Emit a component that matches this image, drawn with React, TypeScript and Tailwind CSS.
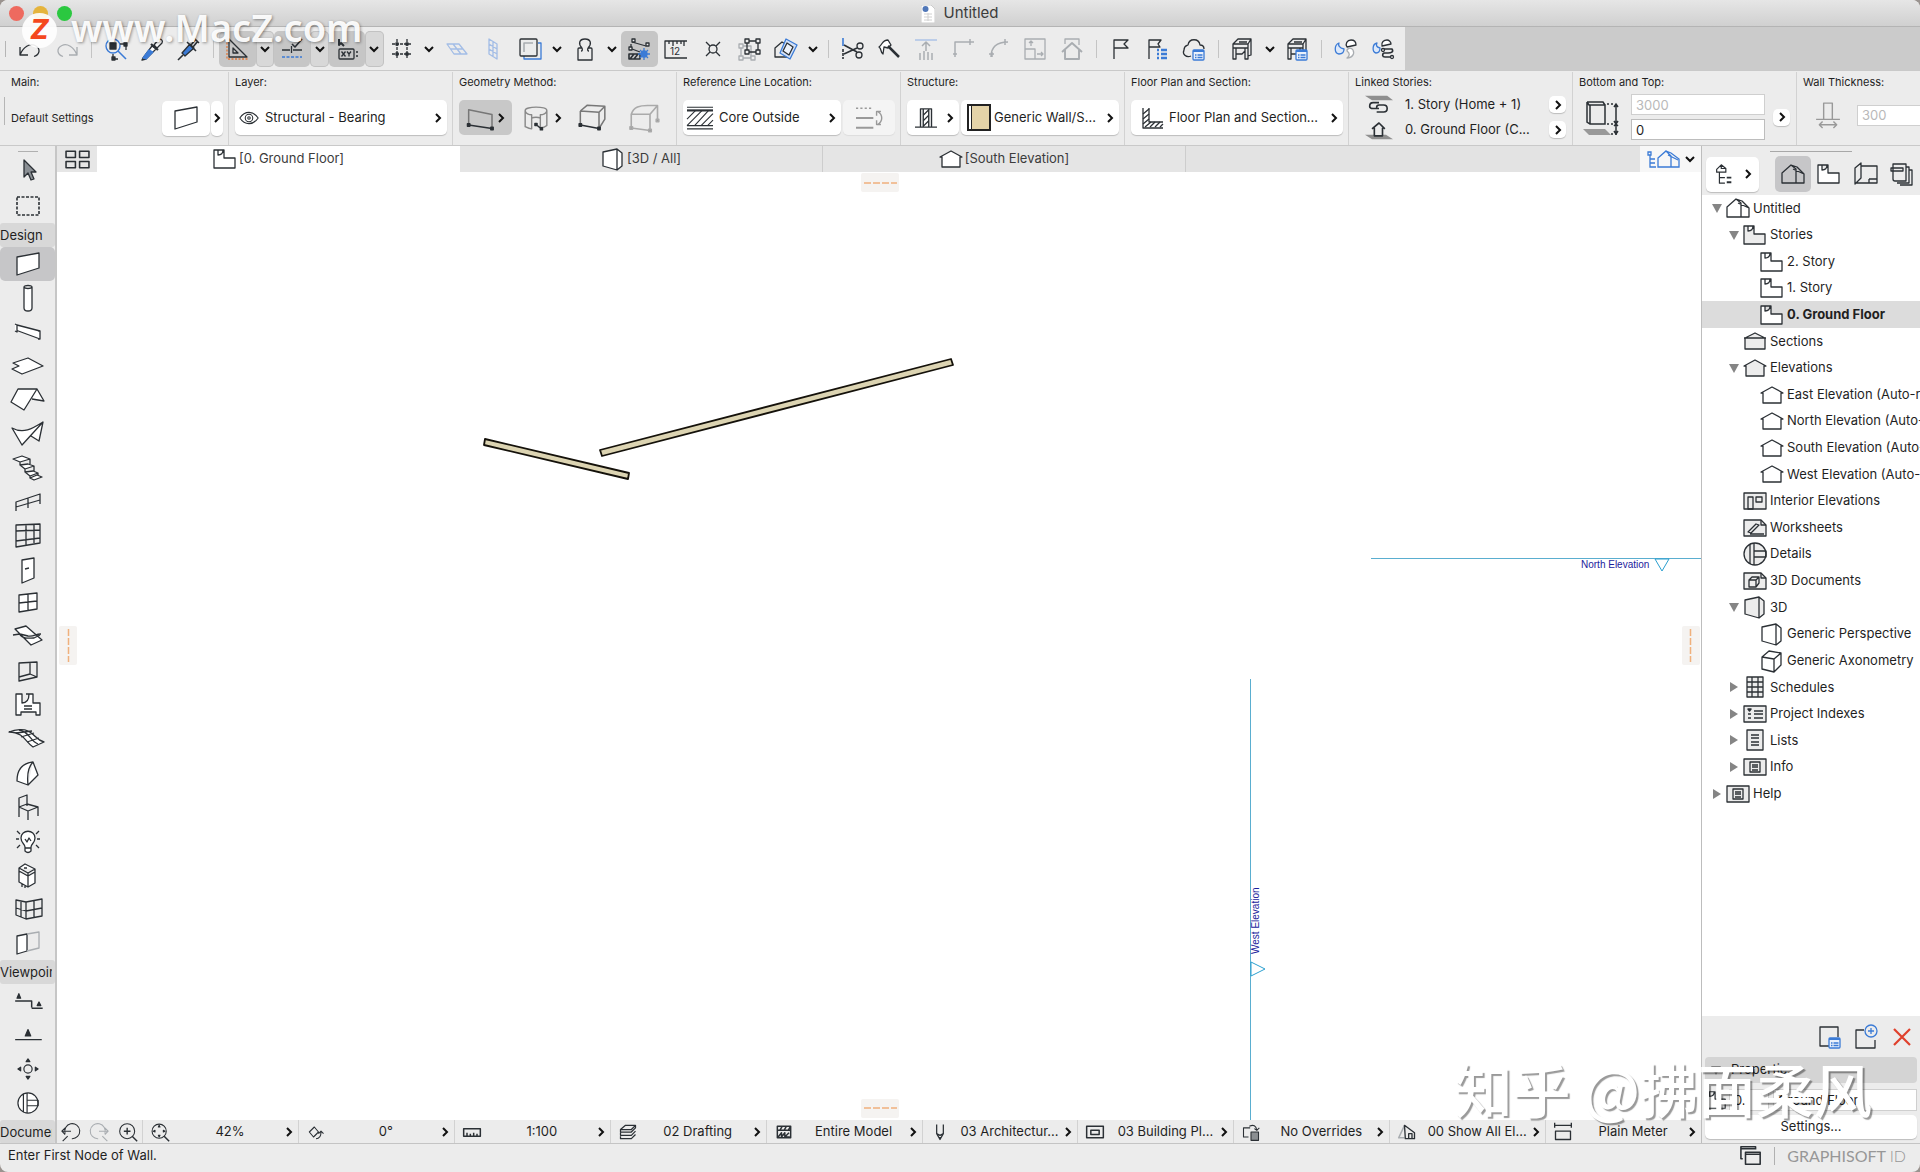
import React, { useState } from 'react';
import { clsx } from 'clsx';

interface GlyphProps {
  size?: number;
  color?: string;
  fill?: string;
  strokeWidth?: number;
  children: React.ReactNode;
}

const INK = '#2b3035';
const BLUE = '#3b7bd6';
const PALE = '#a9adb1';

// All glyphs share a 24 unit box
function Glyph({ size = 24, color = INK, fill = 'none', strokeWidth = 1.3, children }: GlyphProps) {
  return (
    <svg
      width={size}
      height={size}
      viewBox="0 0 24 24"
      fill={fill}
      stroke={color}
      strokeWidth={strokeWidth}
      strokeLinejoin="round"
      className="shrink-0 overflow-visible"
      aria-hidden="true"
    >
      {children}
    </svg>
  );
}

function Chevron({ down = false }: { down?: boolean }) {
  return (
    <svg width="10" height="10" viewBox="0 0 10 10" fill="none" stroke="#111" strokeWidth="2" className="shrink-0" aria-hidden="true">
      <path d={down ? 'M1 3l4 4 4-4' : 'M3 1l4 4-4 4'} />
    </svg>
  );
}

const listBadge = (x: number, y: number) => (
  <g stroke={BLUE}>
    <rect x={x} y={y} width="11" height="10" rx="1" fill="#eaf1fb" />
    <path d={`M${x} ${y + 1}h11`} strokeWidth="2" />
    <path d={`M${x + 2} ${y + 5}h1.5m1 0h5M${x + 2} ${y + 7.5}h1.5m1 0h5`} />
  </g>
);

const tableShape = (
  <path d="M3 7l5-5h13l-3 5zM3 7v15h3V11h9v11h3V7M21 2v16l-3 1M3 11h15M9 5h8M6 17h6l3-3" />
);

const icons = {
  undo: <Glyph><path d="M2 10v8h8M2 18C5 10 12 6 17 8.500c6 3 5 9-1 11" /></Glyph>,
  redo: <Glyph color={PALE}><path d="M22 10v8h-8M22 18C19 10 12 6 7 8.500c-6 3-5 9 1 11" /></Glyph>,
  find: (
    <Glyph>
      <circle cx="9" cy="9" r="7" stroke={BLUE} strokeWidth="1.400" />
      <rect x="6" y="6" width="6" height="6" fill={INK} />
      <path d="M14 14l8 8" stroke={BLUE} strokeWidth="1.600" />
      <path d="M16 7h6v6M9 17v5h5" />
      <path d="M20 6h3v3h-3zM8 20h3v3H8z" fill={INK} />
    </Glyph>
  ),
  dropper: (
    <Glyph>
      <path d="M3 21l9-12 4 3L6 22l-4 1z" fill="#fff" />
      <path d="M3 21l6-8 4 2-7 7z" fill={BLUE} stroke={BLUE} />
      <path d="M11 7l7 6" strokeWidth="2.200" />
      <path d="M14 8l5-6c3 0 4 2 3 4l-5 5z" fill="#fff" />
    </Glyph>
  ),
  syringe: (
    <Glyph>
      <path d="M1 23l5-5" strokeWidth="1.600" />
      <path d="M5 16l8-9 4 4-9 8z" fill={BLUE} />
      <path d="M10 5l9 9M14 8l5-6M16 10l5-6M17 1l5 5" strokeWidth="1.600" />
    </Glyph>
  ),
  setSquare: (
    <Glyph>
      <path d="M4 2v18h18zM8 11v5h5z" />
      <path d="M2 2v20h21" stroke="#e07a3d" strokeDasharray="2 1.500" />
    </Glyph>
  ),
  guides: (
    <Glyph>
      <path d="M2 13h8m3 0h9M11.500 9v7" />
      <path d="M12 7l3 3 7-8" strokeWidth="1.600" />
      <path d="M2 20h20" stroke={BLUE} strokeWidth="1.600" strokeDasharray="3 1.500" />
    </Glyph>
  ),
  coords: (
    <Glyph>
      <path d="M4 2v6l2-2 3 3" strokeWidth="2" />
      <rect x="4" y="12" width="15" height="10" rx="1" />
      <path d="M6.500 14.500l4 5m0-5l-4 5M12 14.500l2 2.500 2-2.500M14 17v2.500M21 15h2M21 19h2" />
    </Glyph>
  ),
  grid: (
    <Glyph>
      <path d="M7 2v20M17 2v20M2 7h20M2 17h20" strokeDasharray="3 1" />
      <path d="M6 6h2v2H6zM16 6h2v2h-2zM6 16h2v2H6zM16 16h2v2h-2z" fill={INK} />
    </Glyph>
  ),
  plane: <Glyph color="#a3bde6"><path d="M2 7h12l8 10H9zM5 12h13M8 7l8 10" /></Glyph>,
  gridPlane: <Glyph color="#a3bde6"><path d="M8 2l8 5v15l-8-5zM12 4.500v15M8 7l8 5M8 12l8 5" /></Glyph>,
  layers: (
    <Glyph>
      <path d="M20 6h3v16H6v-3" stroke={BLUE} strokeWidth="1.300" />
      <rect x="2" y="2" width="17" height="17" rx="1" />
      <path d="M6 15V6h9" stroke={PALE} strokeWidth="1.600" />
    </Glyph>
  ),
  weight: <Glyph><path d="M9 11C5 7 6 2 12 2s7 5 3 9M9 11H6q-1 0-1 1v11h14V12q0-1-1-1h-3M9 11q1 3-1 3M15 11q-1 3 1 3" /></Glyph>,
  snap: (
    <Glyph>
      <path d="M5 5l14 4M4 7v6M5 12l8 3" />
      <path d="M5 2h3v3H5zM19 6h3v3h-3zM2 10h3v3H2z" fill="#eee" />
      <path d="M2 17h11v5H2zM3 22l4-5M7 22l4-5" strokeWidth="1.600" />
      <path d="M17 11v12M11 17h12M13 13l8 8M21 13l-8 8" stroke={BLUE} />
      <circle cx="17" cy="17" r="3" fill={BLUE} stroke={BLUE} />
    </Glyph>
  ),
  ruler: (
    <Glyph>
      <path d="M23 21H1V4h22M5 4v3M9 4v5M13 4v3M17 4v3M20 4v5" />
      <text x="6" y="18" fontSize="10" stroke="none" fill={INK}>12</text>
    </Glyph>
  ),
  node: <Glyph><circle cx="12" cy="12" r="4" /><path d="M5 5l4 4M19 5l-4 4M5 19l4-4M19 19l-4-4" /></Glyph>,
  group: (
    <Glyph>
      <path d="M4 9h10v12H4z" stroke={PALE} />
      <path d="M2 7h4v4H2zM2 19h4v4H2zM14 19h4v4h-4z" fill="#eee" stroke={PALE} />
      <path d="M10 4h11v11H10z" />
      <path d="M8 2h4v4H8zM19 2h4v4h-4zM8 13h4v4H8zM19 13h4v4h-4z" fill="#eee" />
    </Glyph>
  ),
  houseFrame: (
    <Glyph>
      <path d="M1 11l7-6 5 3v12H1z" />
      <path d="M12 2l11 6-7 14-10-6z" stroke={BLUE} fill="#d3e1f7" />
      <path d="M13 6l6 4-4 8-6-4z" stroke={INK} fill="#eef3fb" />
    </Glyph>
  ),
  scissors: (
    <Glyph>
      <path d="M2 1v8" stroke={BLUE} strokeWidth="1.600" />
      <path d="M2 12v10" strokeWidth="1.600" strokeDasharray="3 1" />
      <path d="M3 8l13 7M3 17l13-6" strokeWidth="1.600" />
      <circle cx="19" cy="9" r="3" /><circle cx="18" cy="18" r="3" />
    </Glyph>
  ),
  axe: <Glyph><path d="M2 10c4-3 3-7 9-7l3 5-3 3-4-1-1 7c-3-2-1-5-4-7z" fill="#fff" /><path d="M11 9l11 11" strokeWidth="2.500" /></Glyph>,
  adjust: <Glyph color={PALE}><path d="M1 3h22" stroke="#a3bde6" /><path d="M12 14V5M8 9l4-4 4 4M6 16v7M10 14v9M14 15v8M18 16v7" strokeWidth="1.500" /></Glyph>,
  corner: <Glyph color={PALE}><path d="M5 20V5h11M3 17h4M20 2v6M16 5h8" strokeWidth="1.500" /></Glyph>,
  curve: <Glyph color={PALE}><path d="M4 20C4 11 9 5 21 5M2 17h5M18 2v6M5 20v-5" strokeWidth="1.500" /></Glyph>,
  resize: <Glyph color={PALE}><path d="M2 2h20v20H2zM2 12h10v10M8 9V4M6 6l2-2 2 2M14 17h6M18 15l2 2-2 2" /></Glyph>,
  roofGrey: <Glyph color={PALE}><path d="M5 7V2h14v6" /><path d="M2 15L12 6l10 9M5 13v9h14v-9" strokeWidth="1.900" /></Glyph>,
  flag: <Glyph><path d="M5 22V3h14l-4 4 4 4H5" /></Glyph>,
  flagList: (
    <Glyph>
      <path d="M4 22V3h12l-3 4 2 3H4" />
      <path d="M12 13h2m2 0h6M12 17h2m2 0h6M12 21h2m2 0h6" stroke={BLUE} strokeWidth="2.400" />
    </Glyph>
  ),
  cloudList: (
    <Glyph>
      <path d="M9 19c-5 2-9-2-7-6 0-4 2-4 4-5 1-7 11-7 12 0 3 0 4 2 4 4" />
      {listBadge(11, 13)}
    </Glyph>
  ),
  table: <Glyph>{tableShape}</Glyph>,
  tableList: <Glyph>{tableShape}{listBadge(11, 13)}</Glyph>,
  fans: (
    <Glyph>
      <path d="M13 10c-2-3 0-7 4-7 3 0 5 2 5 5z" fill="#fff" />
      <path d="M10 12c-5-1-6-4-5-6-5 2-5 10 0 11 3 0 5-2 5-5z" stroke={BLUE} fill="#dde9fa" />
      <path d="M13 14c0-3 4-4 6-1 2 4-1 8-6 8 3-2 3-5 0-7z" stroke={PALE} fill="#fff" />
    </Glyph>
  ),
  fansLink: (
    <Glyph>
      <path d="M11 9c-1-4 2-6 5-6 2 0 4 2 4 4z" fill="#fff" />
      <path d="M9 11c-4-1-4-3-3-5-5 1-5 9-1 10 3 0 4-2 4-5z" stroke={BLUE} fill="#dde9fa" />
      <path d="M12 12h9c2 3-1 4-4 4h-4c-2 1-2 4 1 4h7" strokeWidth="1.600" />
      <circle cx="12" cy="13" r="1.500" fill="#fff" /><circle cx="21" cy="20" r="1.500" fill="#fff" />
    </Glyph>
  ),
};

type IconName = keyof typeof icons;
type ToolItem = { kind: 'icon'; name: IconName; label: string; on?: boolean } | { kind: 'more'; on?: boolean } | { kind: 'sep' };

const icon = (name: IconName, label: string, on = false): ToolItem => ({ kind: 'icon', name, label, on });
const more = (on = false): ToolItem => ({ kind: 'more', on });
const sep: ToolItem = { kind: 'sep' };

const toolbar: ToolItem[] = [
  icon('undo', 'Undo'), icon('redo', 'Redo'), sep,
  icon('find', 'Find & Select'), icon('dropper', 'Pick Up Parameters'), icon('syringe', 'Inject Parameters'), sep,
  icon('setSquare', 'Guide Lines', true), more(true),
  icon('guides', 'Snap Guides', true), more(true),
  icon('coords', 'Tracker', true), more(true),
  icon('grid', 'Grid Snap'), more(),
  icon('plane', 'Editing Plane'), icon('gridPlane', 'Grid Plane'),
  icon('layers', 'Trace Reference'), more(),
  icon('weight', 'Gravity'), more(),
  icon('snap', 'Element Snap', true), icon('ruler', 'Measure'), icon('node', 'Suspend Groups'), icon('group', 'Group'),
  icon('houseFrame', 'Marquee View'), more(), sep,
  icon('scissors', 'Split'), icon('axe', 'Trim'), icon('adjust', 'Adjust'), icon('corner', 'Intersect'),
  icon('curve', 'Fillet'), icon('resize', 'Resize'), icon('roofGrey', 'Trim to Roof'), sep,
  icon('flag', 'Markup'), icon('flagList', 'Markup List'), icon('cloudList', 'Cloud'), sep,
  icon('table', 'Favorites'), more(), icon('tableList', 'Library'), sep,
  icon('fans', 'Rotate Views'), icon('fansLink', 'Link Views'),
];

const tools: { label: string; art: React.ReactNode }[] = [
  { label: 'Wall', art: <path d="M1 5l22-4v15L1 23z" fill="#fff" /> },
  { label: 'Column', art: <path d="M8 1v21c0 4 8 4 8 0V1c0-2-8-2-8 0 1 2 7 2 8 0" fill="#fff" /> },
  { label: 'Beam', art: <path d="M-1 4l2 1v7l-2-1M1 5l23 6v8L1 10.500M22 11h2M22 19h2" fill="#fff" /> },
  { label: 'Slab', art: <path d="M1 9l15-5 15 8-21 8-10-5 7-3z" fill="#fff" transform="translate(-4 0)" /> },
  { label: 'Roof', art: <path d="M2 1h19L8 22-5 14zM21 1l7 12-12-2" fill="#fff" /> },
  { label: 'Shell', art: <path d="M-4 6c11 6 20 1 31-6L6 23zM27 0l-4 19-8-5" fill="#fff" /> },
  { label: 'Stair', art: <path d="M-3 3l9-3 8 3-10 3zM4 6v3l8-1 6 2-9 3-5-4M14 3v5M9 13v3l8-1 5 2-8 3-5-4M18 10v5M14 20v2l7-3 5 2-8 3-4-2M22 17v2" fill="#fff" /> },
  { label: 'Railing', art: <path d="M0 21V12l24-8v10M0 17l24-7M12 8v10" /> },
  { label: 'Curtain Wall', art: <path d="M0 1l24-1v19L0 23zM10 1v20M18 0v19M0 7l24-1M0 17l24-3" /> },
  { label: 'Door', art: <path d="M6 2l12-2v20L6 25zM9 11l4-1" fill="#fff" /> },
  { label: 'Window', art: <path d="M3 4l18-2v16L3 21zM12 3v17M3 12l18-2" fill="#fff" /> },
  { label: 'Skylight', art: <path d="M-1 4l11-3 16 14-11 5zM-3 10l7-1 8 2c6 1 7-2 13-2M4 10c4 4 8 3 14 3l6-3" fill="#fff" /> },
  { label: 'Opening', art: <path d="M3 4l18-1v15L3 22zM14 3v12L3 18M14 15l7 3" /> },
  { label: 'Zone', art: <path d="M0 1h6v9c5 0 7-3 7-9h4v9h7v12h-4v-3H5v3H0zM8 13h8M8 16h8M10 1h6" fill="#fff" /> },
  { label: 'Mesh', art: <><path d="M-7 5c7-3 15-3 19-1 7 3 8 9 16 11l-11 5C10 16 8 5-7 5z" fill="#fff" /><path d="M3 3c10 1 11 11 19 14M0 6l16-2M5 10l13-4M11 15l12-4" /></> },
  { label: 'Morph', art: <path d="M1 20C1 8 7 2 17 1l5 13-10 10zM17 1c-5 5-6 14-5 23" fill="#fff" /> },
  { label: 'Object', art: <><path d="M3 22V3l8-3v11M3 12l8-3 11 3-10 4zM12 16v9M22 12v9" /></> },
  { label: 'Lamp', art: <path d="M9 18c0-3-4-4-4-9 0-9 14-9 14 0 0 5-4 6-4 9v4q-3 3-6 0zM9 19h6M9 10l2 3 2-4 2 3M1 2l3 3M23 2l-3 3M0 10h3M21 10h3M1 19l3-3M23 19l-3-3" fill="#fff" /> },
  { label: 'Equipment', art: <path d="M3 5l6-4 10 5v14l-7 4-9-5zM3 5l9 5 7-4M3 8l9 5 7-4M12 10v14M6 21v3M9 23v2M8 5h3" fill="#fff" /> },
  { label: 'Curtain Panel', art: <path d="M0 3l10 2 16-3v17l-16 3-10-4zM10 5v17M5 4v16M0 11l10 3 16-3M18 3v17" /> },
  { label: 'Corner Window', art: <><path d="M1 5l10-2v17l-10 3z" fill="#fff" /><path d="M11 3l12-2v16l-12 3" stroke={PALE} /></> },
];

const viewTools: { label: string; art: React.ReactNode }[] = [
  { label: 'Section', art: <><path d="M-2 12h18v7M16 20h12" strokeWidth="1.600" /><path d="M0 9l2-5 2 5zM22 17l2-4 2 4z" fill={INK} /></> },
  { label: 'Elevation', art: <path d="M-2 17h29M9 13l3-7 3 7z" fill={INK} /> },
  { label: 'Interior Elevation', art: <><circle cx="12" cy="12" r="4.500" /><path d="M10 4l2-3 2 3zM10 20l2 3 2-3zM4 10l-3 2 3 2zM20 10l3 2-3 2z" fill={INK} /></> },
  { label: 'Detail', art: <><circle cx="12" cy="12" r="11" fill="#fff" /><path d="M7 2v20M11 1v22M11 9h12v6H11" /></> },
];

const treeArt = {
  project: <path d="M1 11l9-8 5 4v14H1zM10 3l6 2 7 7v9h-8M12 7l11 5" fill="#fff" />,
  storiesFolder: <path d="M1 3h10v8h11v10H1zM5 3v5c3 0 5-2 5-5" fill="#ececec" />,
  story: <path d="M1 3h10v8h11v10H1zM5 3v5c3 0 5-2 5-5" fill="#fff" />,
  section: <path d="M2 9l10-5 10 5v11H2zM1 9h22" fill="#ececec" />,
  elevationFolder: <path d="M1 10l11-6 11 6h-2v10H3V10z" fill="#ececec" />,
  elevation: <path d="M1 10l11-6 11 6h-2v10H3V10z" fill="#fff" />,
  interior: <><path d="M1 4h22v16H1z" fill="#ececec" /><path d="M5 8h5v12H5zM13 8h6v5h-6z" /></>,
  worksheet: <><path d="M1 4h17l5 5v11H1z" fill="#ececec" /><path d="M5 16l8-8 3 1-8 8zM7 18h14M18 4v5h5" /></>,
  detail: <><circle cx="12" cy="12" r="11" fill="#ececec" /><path d="M7 2v20M11 1v22M11 9h12v6H11" /></>,
  doc3d: <><path d="M1 4h17l5 5v11H1z" fill="#ececec" /><path d="M6 11l3-3h7l-3 3zM6 11h7v7H6zM16 8v6l-3 4M18 4v5h5" /></>,
  boxFolder: <path d="M2 5l14-3 5 4v13l-5 4-14-4zM16 2v21" fill="#ececec" />,
  box: <path d="M2 5l14-3 5 4v13l-5 4-14-4zM16 2v21" fill="#fff" />,
  cube: <path d="M2 8l7-6 12 2v12l-7 7-12-3zM2 8l12 2 7-6M14 10v13" fill="#fff" />,
  schedule: <><path d="M4 2h16v20H4z" fill="#ececec" /><path d="M4 7h16M4 12h16M4 17h16M9 2v20M15 2v20" /></>,
  index: <><path d="M1 4h22v16H1z" fill="#ececec" /><path d="M5 7h3l-1.500 2zM5 12h3M5 16h3M11 9h9M11 12h9M11 16h9" strokeWidth="1.500" /></>,
  list: <><path d="M4 2h16v20H4z" fill="#ececec" /><path d="M8 7h8M8 10h8M8 14h8M8 17h8" /></>,
  info: <><path d="M1 4h22v16H1z" fill="#ececec" /><path d="M7 7h10v10H7zM9 10h6M9 12h6M9 15h6" /></>,
};

interface TreeRow {
  label: string;
  level: 0 | 1 | 2;
  art: keyof typeof treeArt;
  state?: 'open' | 'closed';
}

const tree: TreeRow[] = [
  { label: 'Untitled', level: 0, art: 'project', state: 'open' },
  { label: 'Stories', level: 1, art: 'storiesFolder', state: 'open' },
  { label: '2. Story', level: 2, art: 'story' },
  { label: '1. Story', level: 2, art: 'story' },
  { label: '0. Ground Floor', level: 2, art: 'story' },
  { label: 'Sections', level: 1, art: 'section' },
  { label: 'Elevations', level: 1, art: 'elevationFolder', state: 'open' },
  { label: 'East Elevation (Auto-rebuild Model)', level: 2, art: 'elevation' },
  { label: 'North Elevation (Auto-rebuild Model)', level: 2, art: 'elevation' },
  { label: 'South Elevation (Auto-rebuild Model)', level: 2, art: 'elevation' },
  { label: 'West Elevation (Auto-rebuild Model)', level: 2, art: 'elevation' },
  { label: 'Interior Elevations', level: 1, art: 'interior' },
  { label: 'Worksheets', level: 1, art: 'worksheet' },
  { label: 'Details', level: 1, art: 'detail' },
  { label: '3D Documents', level: 1, art: 'doc3d' },
  { label: '3D', level: 1, art: 'boxFolder', state: 'open' },
  { label: 'Generic Perspective', level: 2, art: 'box' },
  { label: 'Generic Axonometry', level: 2, art: 'cube' },
  { label: 'Schedules', level: 1, art: 'schedule', state: 'closed' },
  { label: 'Project Indexes', level: 1, art: 'index', state: 'closed' },
  { label: 'Lists', level: 1, art: 'list', state: 'closed' },
  { label: 'Info', level: 1, art: 'info', state: 'closed' },
  { label: 'Help', level: 0, art: 'info', state: 'closed' },
];

const quickOptions: { label: string; art: React.ReactNode }[] = [
  { label: '42%', art: <><circle cx="11" cy="11" r="8.500" /><path d="M17 17l6 6" strokeWidth="1.800" /><path d="M10 6l1-2 1 2zM10 16l1 2 1-2zM6 10l-2 1 2 1zM16 10l2 1-2 1z" fill={INK} /></> },
  { label: '0°', art: <path d="M4 12l6-6 5 6-6 6zM12 20c5 0 6-3 6-8M15 14l3-3 3 3" /> },
  { label: '1:100', art: <path d="M2 8h20v9H2zM6 17v-4M10 17v-3M14 17v-4M18 17v-3" strokeWidth="1.800" /> },
  { label: '02 Drafting', art: <path d="M3 9l6-5h12l-5 5zM3 9v3h13l5-5V4M3 13v3h13l5-5M3 17v3h13l5-5" strokeWidth="1.500" /> },
  { label: 'Entire Model', art: <path d="M4 5h16v14H4zM4 10h16M7 10l3-5M12 10l3-5M17 10l3-5M5 18l4-5v5l4-5v5l5-5M13 18h6" strokeWidth="1.800" /> },
  { label: '03 Architectur...', art: <path d="M8 3v11l4 7 4-7V3M8 14l4 2 4-2M12 18v3" strokeWidth="1.500" /> },
  { label: '03 Building Pl...', art: <path d="M2 5h20v14H2zM7 10h10v5H7z" strokeWidth="1.800" /> },
  { label: 'No Overrides', art: <><path d="M11 7H3v11h6M10 5c5-2 8-1 9 5M16 8l3 2 3-3" /><path d="M12 12h9v10h-9z" fill="#8b8f92" /></> },
  { label: '00 Show All El...', art: <><path d="M9 4L2 19h7" stroke={PALE} strokeWidth="1.800" /><path d="M9 4l12 9v7H10zM14 20v-6h4v6" strokeWidth="1.600" /></> },
  { label: 'Plain Meter', art: <path d="M2 4h20M2 1v6M22 1v6M3 11h18v10H3z" strokeWidth="1.600" /> },
];

const tabs = [
  { label: '[0. Ground Floor]', art: treeArt.story },
  { label: '[3D / All]', art: treeArt.box },
  { label: '[South Elevation]', art: treeArt.elevation },
];

const cardButton = 'flex items-center rounded-[5px] bg-white shadow-[0_1px_1px_#0003]';

function InfoSection({ title, className, children }: { title: string; className?: string; children: React.ReactNode }) {
  return (
    <section className={clsx('flex shrink-0 flex-col border-r border-[#d2d2d2] pr-[5px] pl-[6px]', className ?? 'w-56')}>
      <h2 className="pt-0.5 text-[11px] leading-4">{title}</h2>
      {children}
    </section>
  );
}

function ChevronButton({ label }: { label: string }) {
  return (
    <button aria-label={label} className={clsx(cardButton, 'h-[17px] w-[17px] shrink-0 justify-center')}>
      <Chevron />
    </button>
  );
}

function InfoBar() {
  return (
    <div className="flex h-[75px] shrink-0 overflow-hidden border-b border-[#c9c9c9] pt-px">
      <div className="flex w-[5px] shrink-0 items-center justify-end pt-1">
        <span className="h-7 w-px bg-[#b5b5b5]" />
      </div>
      <InfoSection title="Main:" className="w-56">
        <div className="mt-2.5 flex h-9 items-center">
          <span className="flex-1 text-[11px]">Default Settings</span>
          <button aria-label="Wall settings" className={clsx(cardButton, 'h-[35px] w-12 justify-center')}>
            <Glyph><path d="M1 5l22-4v15L1 23z" /></Glyph>
          </button>
          <button aria-label="Favorites" className={clsx(cardButton, 'ml-px h-[35px] w-3 justify-center')}>
            <Chevron />
          </button>
        </div>
      </InfoSection>
      <InfoSection title="Layer:">
        <button className={clsx(cardButton, 'mt-2.5 h-[35px] gap-1.5 px-1 text-[13px]')}>
          <Glyph size={20}><path d="M1 12c6-9 16-9 22 0-6 9-16 9-22 0z" /><circle cx="12" cy="12" r="4.500" /><circle cx="12" cy="12" r="1.500" /></Glyph>
          <span className="flex-1 text-left">Structural - Bearing</span>
          <Chevron />
        </button>
      </InfoSection>
      <InfoSection title="Geometry Method:">
        <div className="mt-2.5 flex h-[35px] items-center">
          <button aria-label="Straight" aria-pressed="true" className="flex h-[35px] w-[53px] items-center justify-center gap-1 rounded-[5px] bg-[#c8c8c8]">
            <Glyph size={28} color="#777">
              <path d="M4 18V5l20 4v12" />
              <path d="M4 18l20 3" stroke={INK} />
              <path d="M3 17h2v2H3zM23 20h2v2h-2z" fill={INK} stroke={INK} />
            </Glyph>
            <Chevron />
          </button>
          <button aria-label="Curved" className="ml-2 flex h-[35px] w-[46px] items-center justify-center gap-1">
            <Glyph size={26} color="#888">
              <path d="M2 5c0-4 20-4 20 0v14c-2 2-5 2-6 2v-9c-2-1-6-1-8 0v10c-2 0-4-1-6-2zM2 5c0 3 4 4 6 4v3M22 5c0 3-4 4-6 4v3" />
              <path d="M11 17h2v2h-2zM16 21h2v2h-2zM12 18l5 4" fill={INK} stroke={INK} />
            </Glyph>
            <Chevron />
          </button>
          <button aria-label="Trapezoid" className="flex h-[35px] w-[53px] items-center justify-center">
            <Glyph size={28}>
              <path d="M2 6v13M2 6l6-5 15 1-5 5-16-1M23 2v11l-5 8V7" stroke="#777" />
              <path d="M2 18l16 3" />
              <path d="M1 17h2v2H1zM17 20h2v2h-2z" fill={INK} />
            </Glyph>
          </button>
          <button aria-label="Polygon" className="flex h-[35px] w-[53px] items-center justify-center">
            <Glyph size={30} color="#aaa">
              <path d="M1 20V9C3 3 8 2 14 2h8l-6 7v12M1 9h15M22 2v12M1 20l15 2" />
              <path d="M0 19h2v2H0zM15 21h2v2h-2zM21 13h2v2h-2z" fill="#999" />
            </Glyph>
          </button>
        </div>
      </InfoSection>
      <InfoSection title="Reference Line Location:">
        <div className="mt-2.5 flex items-center gap-0.5">
          <button className={clsx(cardButton, 'h-[35px] w-[159px] gap-1.5 px-1 text-[13px]')}>
            <Glyph size={26}>
              <path d="M0 2h24M0 22h24M0 19h24" strokeWidth="1" />
              <path d="M0 5h24" strokeWidth="2" />
              <path d="M0 13l8-8M0 19L14 5M7 19L20 5M13 19L24 8M19 19l5-5" strokeWidth="1" />
            </Glyph>
            <span className="flex-1 text-left">Core Outside</span>
            <Chevron />
          </button>
          <button aria-label="Flip wall" className="flex h-[35px] w-[52px] items-center justify-center rounded-[5px] bg-[#f4f4f4] shadow-[0_1px_1px_#0001]">
            <Glyph size={26} color="#999">
              <path d="M0 3h16" strokeDasharray="2 2" />
              <path d="M0 12h16M0 21h16" strokeWidth="1.800" />
              <path d="M20 6c5 3 5 9 0 12M23 6h-4v4M23 18h-4v-4" />
            </Glyph>
          </button>
        </div>
      </InfoSection>
      <InfoSection title="Structure:">
        <div className="mt-2.5 flex items-center gap-0.5">
          <button aria-label="Structure type" className={clsx(cardButton, 'h-[35px] w-[52px] justify-center gap-2 pl-1')}>
            <Glyph size={22}>
              <path d="M0 22h24M6 22V2h12v20M9 2v20M15 2v20" strokeWidth="1.500" />
              <path d="M9 9l6-6M9 15l6-6M9 21l6-6" />
            </Glyph>
            <Chevron />
          </button>
          <button className={clsx(cardButton, 'h-[35px] flex-1 gap-[3px] px-1 text-[13px]')}>
            <span className="ml-0.5 h-[27px] w-6 border-2 border-[#222] bg-[#e4d3a8] shadow-[inset_2px_0_#fff,inset_3px_0_#222]" />
            <span className="flex-1 text-left">Generic Wall/S...</span>
            <Chevron />
          </button>
        </div>
      </InfoSection>
      <InfoSection title="Floor Plan and Section:">
        <button className={clsx(cardButton, 'mt-2.5 h-[35px] gap-1 pr-1 pl-2.5 text-[13px]')}>
          <Glyph>
            <path d="M2 2v20h20M8 2v14h14" />
            <path d="M2 8l6-5M2 13l6-5M2 18l6-5M4 21l6-5M9 21l5-5M14 21l5-5M19 21l3-3" />
          </Glyph>
          <span className="flex-1 text-left">Floor Plan and Section...</span>
          <Chevron />
        </button>
      </InfoSection>
      <InfoSection title="Linked Stories:">
        <div className="mt-0.5 flex h-[25px] items-center gap-3 pr-px pl-2.5 text-[13px]">
          <Glyph size={28}>
            <path d="M0 4h19l5 4H6z" fill="#8f8f8f" stroke="none" />
            <path d="M12 10H7q-3 0-3 3 0 2 3 2h5M10 18h6q3 0 3-3t-3-3h-4q-2 0-2 2v1" strokeWidth="1.400" />
          </Glyph>
          <span className="flex-1">1. Story (Home + 1)</span>
          <ChevronButton label="Top story" />
        </div>
        <div className="flex h-[25px] items-center gap-3 pr-px pl-2.5 text-[13px]">
          <Glyph size={28}>
            <path d="M0 16h18l6 4H6z" fill="#8f8f8f" stroke="none" />
            <path d="M6 11l6-5 5 5M8 10v7h7v-7" fill="#ececec" strokeWidth="1.400" />
          </Glyph>
          <span className="flex-1">0. Ground Floor (C...</span>
          <ChevronButton label="Home story" />
        </div>
      </InfoSection>
      <InfoSection title="Bottom and Top:">
        <div className="mt-1 flex items-center gap-2 pl-1">
          <svg width="40" height="36" viewBox="0 0 40 36" fill="none" stroke={INK} strokeWidth="1.500" aria-hidden="true">
            <path d="M4 3h16l2 3M4 3v20l3 2h15V6H6L4 3M7 6v19" />
            <path d="M24 5h8M24 25h8M28 35h6" strokeDasharray="2 2" />
            <path d="M33 6v28M31 8l2-3 2 3M31 22l2 3 2-3M31 27l2-2 2 2M31 32l2 3 2-3" />
            <path d="M0 30h22l6 6H6z" fill="#999" stroke="none" />
          </svg>
          <div className="flex flex-col gap-1">
            <input aria-label="Top offset" disabled defaultValue="3000" className="h-[21px] w-[134px] border border-[#cfcfcf] bg-white px-1 text-[13px] text-[#b9b9b9]" />
            <input aria-label="Bottom offset" defaultValue="0" className="h-[21px] w-[134px] border border-[#bdbdbd] bg-white px-1 text-[13px]" />
          </div>
          <ChevronButton label="Bottom and top options" />
        </div>
      </InfoSection>
      <InfoSection title="Wall Thickness:">
        <div className="mt-3 flex items-center gap-4 pl-3">
          <Glyph size={26} color="#999">
            <path d="M8 16V1h8v15M1 16h22M4 21h16M7 18l-3 3 3 3M17 18l3 3-3 3" />
          </Glyph>
          <input aria-label="Wall thickness" disabled defaultValue="300" className="h-[21px] w-[134px] shrink-0 border border-[#cfcfcf] bg-white px-1 text-[13px] text-[#b9b9b9]" />
        </div>
      </InfoSection>
    </div>
  );
}

function Toolbar() {
  return (
    <div className="flex h-11 shrink-0 border-b border-[#c9c9c9] bg-[#cbcbcb]">
      <div className="flex w-[1405px] items-center bg-[#ececec] pr-1">
        <span className="mr-[6px] ml-[5px] h-4 w-px bg-[#b5b5b5]" />
        {toolbar.map((item, i) => {
          if (item.kind === 'sep') {
            return (
              <span key={i} className="flex flex-[2] basis-0 justify-center">
                <span className="h-[18px] w-px bg-[#c4c4c4]" />
              </span>
            );
          }
          if (item.kind === 'more') {
            return (
              <button
                key={i}
                aria-label="More options"
                className={clsx('flex h-9 min-w-0 flex-[3] basis-0 items-center justify-center rounded-[5px]', item.on && 'bg-[#d8d8d8] shadow-[inset_0_0_0_1px_#c2c2c2]')}
              >
                <Chevron down />
              </button>
            );
          }
          return (
            <button
              key={i}
              aria-label={item.label}
              className={clsx('flex h-9 min-w-0 flex-[6] basis-0 items-center justify-center rounded-[5px]', item.on && 'bg-[#c6c6c6]')}
            >
              {icons[item.name]}
            </button>
          );
        })}
      </div>
    </div>
  );
}

function ToolboxHeading({ children }: { children: string }) {
  return (
    <h2 className="shrink-0 rounded-[3px] bg-[#d8d8d8] pr-[3px] text-[13px] leading-6">
      <span className="block overflow-hidden whitespace-nowrap">{children}</span>
    </h2>
  );
}

function Toolbox({ active, onPick }: { active: string; onPick: (label: string) => void }) {
  return (
    <aside className="flex w-[57px] shrink-0 flex-col overflow-hidden border-r-2 border-[#c6c6c6]">
      <span className="mx-auto mt-[5px] h-px w-5 shrink-0 bg-[#b0b0b0]" />
      <button aria-label="Arrow" className="flex h-9 shrink-0 items-center justify-center">
        <Glyph><path d="M8 2v17l4-4 3 7 3-1-3-7h5z" fill="#8a8f94" /></Glyph>
      </button>
      <button aria-label="Marquee" className="flex h-[35px] shrink-0 items-center justify-center">
        <Glyph><path d="M1 3h22v18H1z" strokeDasharray="3 1.500" strokeWidth="1.600" /></Glyph>
      </button>
      <ToolboxHeading>Design</ToolboxHeading>
      <div className="grid h-[713px] shrink-0 auto-rows-fr">
        {tools.map((tool) => (
          <button
            key={tool.label}
            aria-label={tool.label}
            aria-pressed={tool.label === active}
            onClick={() => onPick(tool.label)}
            className={clsx('flex items-center justify-center rounded-[5px]', tool.label === active && 'bg-[#c6c6c8]')}
          >
            <Glyph>{tool.art}</Glyph>
          </button>
        ))}
      </div>
      <ToolboxHeading>Viewpoint</ToolboxHeading>
      {viewTools.map((tool) => (
        <button key={tool.label} aria-label={tool.label} className="flex h-[34px] shrink-0 items-center justify-center">
          <Glyph size={22}>{tool.art}</Glyph>
        </button>
      ))}
      <ToolboxHeading>Document</ToolboxHeading>
    </aside>
  );
}

function Canvas() {
  return (
    <div className="relative min-h-0 flex-1 overflow-hidden bg-white">
      <svg className="absolute top-0 left-0 h-full w-full" fontFamily="Liberation Sans, Arial, sans-serif" fontSize="10">
        <g fill="#dcd4b2" stroke="#14110a" strokeWidth="1.800" strokeLinejoin="round">
          <path d="M543 278L894 187l2 6L545 284z" />
          <path d="M428 267l144 34-1 6-144-34z" />
        </g>
        <g fill="none" stroke="#5aaed0">
          <path d="M1314 386.500H1644" />
          <path d="M1598 387h14l-7 12z" stroke="#2a9fd0" />
          <path d="M1193.500 507V948" />
          <path d="M1194 790v14l14-7z" stroke="#2a9fd0" />
        </g>
        <text x="1524" y="396" fill="#1c1c9c">North Elevation</text>
        <text x="0" y="0" fill="#1c1c9c" transform="translate(1202 782) rotate(-90)">West Elevation</text>
        <g fill="#f5f3f1">
          <rect x="804" y="1" width="38" height="19" rx="2" />
          <rect x="804" y="927" width="38" height="19" rx="2" />
          <rect x="2" y="454" width="18" height="39" rx="2" />
          <rect x="1625" y="454" width="18" height="39" rx="2" />
        </g>
        <path d="M807 11h33M807 936h33M11.500 457v33M1633.500 457v33" stroke="#f0b07c" strokeWidth="1.500" strokeDasharray="7 2" />
      </svg>
    </div>
  );
}

function TabBar() {
  return (
    <div className="flex h-[26px] shrink-0 bg-[#e3e3e3] text-[13px] text-[#3c3c3c]">
      <button aria-label="Tab overview" className="flex w-10 items-center justify-center bg-[#e6e6e6]">
        <Glyph size={25}><path d="M1 4h9v6H1zM14 4h9v6h-9zM1 14h9v6H1zM14 14h9v6h-9z" strokeWidth="1.500" /></Glyph>
      </button>
      {tabs.map((tab, i) => (
        <button
          key={tab.label}
          className={clsx('flex w-[363px] items-center justify-center gap-0.5', i === 0 ? 'bg-white' : 'border-r border-[#cdcdcd] bg-[#e5e5e5]')}
        >
          <Glyph>{tab.art}</Glyph>
          {tab.label}
        </button>
      ))}
      <button aria-label="Navigator popup" className="ml-auto flex w-[61px] items-center justify-center gap-1 bg-[#f7f7f7]">
        <svg width="34" height="20" viewBox="0 0 34 20" fill="none" stroke={BLUE} strokeWidth="1.300" aria-hidden="true">
          <path d="M1 3h3v3H1zM3 6v12h6M3 10h5M3 14h5M11 9l8-7 5 5v11H11zM19 2l5 2 8 6v8h-8M21 6l10 5" />
        </svg>
        <Chevron down />
      </button>
    </div>
  );
}

function QuickOptions() {
  return (
    <div className="flex h-[23px] shrink-0 bg-[#ececec] text-[13px]">
      <div className="flex w-[86px] shrink-0 items-center justify-around border-r border-[#d2d2d2]">
        <button aria-label="Previous view"><Glyph size={20}><path d="M5 14a9 9 0 1 1 8 6M1 11h11M5 7l-4 4 4 4M8 17l-6 6" /></Glyph></button>
        <button aria-label="Next view"><Glyph size={20} color={PALE}><path d="M19 14a9 9 0 1 0-8 6M23 11H12M19 7l4 4-4 4M16 17l6 6" /></Glyph></button>
        <button aria-label="Zoom in"><Glyph size={20}><circle cx="11" cy="11" r="9" /><path d="M17 17l6 6M7 11h8M11 7v8" strokeWidth="1.700" /></Glyph></button>
      </div>
      {quickOptions.map((option) => (
        <button key={option.label} className="flex min-w-0 flex-1 items-center border-r border-[#d2d2d2] pr-1 pl-[7px] whitespace-nowrap last:border-r-0">
          <Glyph size={20}>{option.art}</Glyph>
          <span className="flex-1 pl-1.5 text-center">{option.label}</span>
          <Chevron />
        </button>
      ))}
    </div>
  );
}

function Navigator() {
  const [selected, setSelected] = useState('0. Ground Floor');
  const indent = ['pl-[10px]', 'pl-[27px]', 'pl-[44px]'];

  return (
    <aside className="flex w-[219px] shrink-0 flex-col overflow-hidden border-l border-[#bdbdbd] text-[13px]">
      <div className="h-[49px] shrink-0 pt-[5px]">
        <div className="ml-[68px] h-px w-[82px] bg-[#a8a8a8]" />
        <div className="mt-1 flex items-center">
          <button aria-label="Project chooser" className={clsx(cardButton, 'ml-1 h-[35px] w-[53px] justify-center gap-2')}>
            <Glyph size={22}><path d="M4 7l5-5 5 4v4H4zM9 2v4h5M7 10v12h6M7 16h6" /><path d="M15 16h5M15 21h5" strokeWidth="2" /></Glyph>
            <Chevron />
          </button>
          <div className="ml-4 flex">
            <button aria-label="Project Map" aria-pressed="true" className="flex h-9 w-9 items-center justify-center rounded-[5px] bg-[#c6c6c8]">
              <Glyph><path d="M1 11l9-8 5 4v14H1zM10 3l6 2 7 7v9h-8M12 7l11 5" /></Glyph>
            </button>
            <button aria-label="View Map" className="flex h-9 w-9 items-center justify-center"><Glyph>{treeArt.story}</Glyph></button>
            <button aria-label="Layout Book" className="flex h-9 w-[37px] items-center justify-center">
              <Glyph><path d="M1 6l6-5v15l-6 6zM7 4h16v17H1M15 17h8M15 21v-4" /></Glyph>
            </button>
            <button aria-label="Publisher" className="flex h-9 w-9 items-center justify-center">
              <Glyph><path d="M3 2h13v17H5q-2 0-2-2zM16 5h3v16H7M19 8h3v15H10M1 6h12v3H1z" /></Glyph>
            </button>
          </div>
        </div>
      </div>
      <div className="min-h-0 flex-1 bg-white">
        <ul className="grid h-[612px] auto-rows-fr">
          {tree.map((row) => (
            <li key={row.label} className={clsx('flex', row.label === selected && 'bg-[#dcdcdc] font-bold')}>
              <button onClick={() => setSelected(row.label)} className={clsx('flex flex-1 items-center whitespace-nowrap', indent[row.level])}>
                <svg width="10" height="10" viewBox="0 0 10 10" fill="#858585" className="mr-1 shrink-0" aria-hidden="true">
                  {row.state === 'open' && <path d="M0 1h10L5 10z" />}
                  {row.state === 'closed' && <path d="M1 0l8 5-8 5z" />}
                </svg>
                <Glyph>{treeArt[row.art]}</Glyph>
                <span className="ml-[3px]">{row.label}</span>
              </button>
            </li>
          ))}
        </ul>
      </div>
      <div className="flex h-[41px] shrink-0 items-center justify-end gap-3 pr-1.5">
        <button aria-label="View settings"><Glyph><path d="M11 21H2V2h18v10" />{listBadge(11, 13)}</Glyph></button>
        <button aria-label="New view">
          <Glyph><path d="M10 5H2v18h19V15" /><circle cx="17" cy="6" r="6" stroke={BLUE} /><path d="M17 3v6M14 6h6" stroke={BLUE} /></Glyph>
        </button>
        <button aria-label="Delete"><Glyph color="#e0402c" strokeWidth={2.2}><path d="M4 4l16 16M20 4L4 20" /></Glyph></button>
      </div>
      <div className="flex shrink-0 flex-col px-[3px]">
        <button className="flex h-[26px] items-center rounded-[4px] bg-[#d4d4d4] pl-1.5">
          <svg width="10" height="10" viewBox="0 0 10 10" fill="#858585" className="mr-2.5" aria-hidden="true"><path d="M0 1h10L5 10z" /></svg>
          Properties
        </button>
        <div className="mt-1.5 flex h-[22px] items-center">
          <Glyph size={22}>{treeArt.story}</Glyph>
          <input aria-label="Story number" defaultValue="0." className="ml-0.5 h-[22px] w-10 border border-[#cfcfcf] bg-white px-1" />
          <input aria-label="Story name" defaultValue="Ground Floor" className="ml-1 h-[22px] min-w-0 flex-1 border border-[#cfcfcf] bg-white px-1" />
        </div>
        <button className={clsx(cardButton, 'mt-1 mb-1 h-6 justify-center')}>Settings...</button>
      </div>
    </aside>
  );
}

export default function App() {
  const [tool, setTool] = useState('Wall');

  return (
    <div className="h-screen bg-[#9a938f] font-['Inter',sans-serif] text-[#1f1f1f]">
      <div className="relative flex h-full flex-col overflow-hidden rounded-lg bg-[#ececec]">
        <header className="flex h-[27px] shrink-0 items-center border-b border-[#b4b4b4] bg-linear-to-b from-[#e6e6e6] to-[#d0d0d0]">
          <div className="flex w-20 gap-[9px] pl-[9px]">
            <button aria-label="Close" className="h-[15px] w-[15px] rounded-full bg-[#ee6a5f]" />
            <button aria-label="Minimize" className="h-[15px] w-[15px] rounded-full bg-[#e5b43c]" />
            <button aria-label="Zoom" className="h-[15px] w-[15px] rounded-full bg-[#2bc840]" />
          </div>
          <h1 className="flex flex-1 items-center justify-center gap-2 pt-px pr-20 text-[15px] text-[#3c3c3c]">
            <svg width="14" height="18" viewBox="0 0 14 18" aria-hidden="true">
              <path d="M0 0h10l4 4v14H0z" fill="#fff" stroke="#ccc" />
              <circle cx="4.500" cy="4" r="3" fill="#5077b8" />
              <path d="M3 9h8M3 12h8M3 15h8M7 8v8" stroke="#d0d0d0" />
            </svg>
            Untitled
          </h1>
        </header>
        <Toolbar />
        <InfoBar />
        <main className="flex min-h-0 flex-1">
          <Toolbox active={tool} onPick={setTool} />
          <div className="flex min-w-0 flex-1 flex-col">
            <TabBar />
            <Canvas />
            <QuickOptions />
          </div>
          <Navigator />
        </main>
        <footer className="flex h-[29px] shrink-0 items-center border-t border-[#c4c4c4] px-2 pb-1 text-[13px]">
          <p className="flex-1">Enter First Node of Wall.</p>
          <Glyph size={22}><path d="M3 15H1V2h16v3M1 4h16M6 8h16v13H6zM6 10h16" strokeWidth="1.700" /></Glyph>
          <span className="mx-3 h-[18px] w-px bg-[#b0b0b0]" />
          <span className="pr-1.5 font-['Lato',sans-serif] text-base text-[#979797]">GRAPHISOFT <span className="font-light">ID</span></span>
        </footer>

        {/* Watermarks over the window */}
        <div className="pointer-events-none absolute top-1 left-[22px] flex items-center gap-3.5">
          <span className="mt-1.5 flex h-[35px] w-[35px] items-center justify-center rounded-full bg-white/90 text-[27px] font-extrabold text-[#f4481e] italic">Z</span>
          <span className="font-['Noto_Sans',sans-serif] text-[38px] leading-[46px] font-semibold text-white/95 [text-shadow:1px_1px_3px_#0006]">www.MacZ.com</span>
        </div>
        <div className="pointer-events-none absolute right-12 bottom-12 font-['Noto_Sans_CJK_SC',sans-serif] text-[58px] leading-[72px] font-medium whitespace-nowrap text-white [text-shadow:2px_2px_1px_#0006]">
          知乎 @拂面柔风
        </div>
      </div>
    </div>
  );
}
